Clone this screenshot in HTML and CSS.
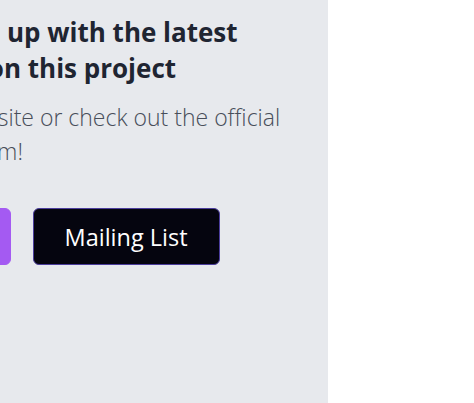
FILE: index.html
```html
<!DOCTYPE html>
<html lang="en">
<head>
<meta charset="utf-8">
<title>Stay up to date</title>
<link rel="stylesheet" href="styles.css">
</head>
<body>
  <section class="cta">
    <div class="cta-inner">
      <h2 class="cta-title">Let's keep up with the latest<br>progress on this project</h2>
      <p class="cta-text">See our website or check out the official<br>Discord forum!</p>
      <div class="cta-actions">
        <a class="btn btn-primary" href="#">GitHub</a>
        <a class="btn btn-dark" href="#">Mailing List</a>
      </div>
    </div>
  </section>
</body>
</html>
```

FILE: styles.css
```css
html, body {
  margin: 0;
  padding: 0;
  background: #ffffff;
}

body {
  font-family: "Open Sans", "Noto Sans", sans-serif;
  width: 474px;
  height: 403px;
  overflow: hidden;
}

.cta {
  width: 328px;
  height: 403px;
  background: #e7e9ed;
  overflow: hidden;
}

.cta-inner {
  margin-left: -131px;
  padding-top: 14px;
  width: 700px;
}

.cta-title {
  margin: 0;
  font-size: 26px;
  line-height: 36px;
  font-weight: 700;
  color: #1f2532;
  white-space: nowrap;
}

.cta-text {
  margin: 14px 0 0;
  font-size: 23px;
  line-height: 34px;
  font-weight: 300;
  color: #484e5a;
  white-space: nowrap;
}

.cta-actions {
  display: flex;
  gap: 22px;
  margin-top: 40px;
}

.btn {
  box-sizing: border-box;
  display: flex;
  align-items: center;
  justify-content: center;
  height: 57px;
  padding: 0 31px;
  border-radius: 6px;
  font-size: 23.5px;
  text-decoration: none;
  color: #ffffff;
}

.btn-primary {
  background: #a45af2;
  border: 1px solid #a45af2;
}

.btn-dark {
  background: #05050f;
  border: 1px solid #4b3d9c;
}
```
